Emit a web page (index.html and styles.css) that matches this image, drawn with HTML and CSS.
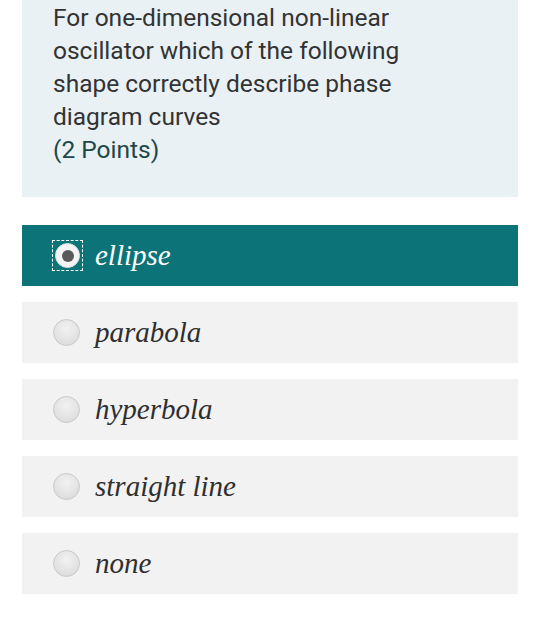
FILE: index.html
```html
<!DOCTYPE html>
<html>
<head>
<meta charset="utf-8">
<link rel="stylesheet" href="styles.css">
</head>
<body>
<div class="page">
  <div class="question">
    <div class="qtext">For one-dimensional non-linear oscillator which of the following shape correctly describe phase diagram curves</div>
    <div class="points">(2 Points)</div>
  </div>
  <div class="options">
    <div class="option selected">
      <span class="focus"><span class="radio"><span class="dot"></span></span></span>
      <span class="label">ellipse</span>
    </div>
    <div class="option">
      <span class="radio"></span>
      <span class="label">parabola</span>
    </div>
    <div class="option">
      <span class="radio"></span>
      <span class="label">hyperbola</span>
    </div>
    <div class="option">
      <span class="radio"></span>
      <span class="label">straight line</span>
    </div>
    <div class="option">
      <span class="radio"></span>
      <span class="label">none</span>
    </div>
  </div>
</div>
</body>
</html>
```
FILE: styles.css
```css
html, body {
  margin: 0;
  padding: 0;
  background: #ffffff;
}
.page {
  width: 496px;
  margin-left: 22px;
}
.question {
  background: #e9f1f5;
  height: 197px;
  box-sizing: border-box;
  padding: 1px 0 0 31px;
  font-family: Roboto, "Liberation Sans", sans-serif;
  font-size: 24.5px;
  line-height: 33px;
  color: #333333;
}
.qtext {
  width: 385px;
}
.points {
  color: #1f4747;
}
.options {
  display: flex;
  flex-direction: column;
  gap: 16px;
  margin-top: 28px;
}
.option {
  height: 61px;
  background: #f2f2f2;
  display: flex;
  align-items: center;
  padding-left: 31px;
  box-sizing: border-box;
}
.option.selected {
  background: #0c7378;
}
.radio {
  width: 27px;
  height: 27px;
  border-radius: 50%;
  background: radial-gradient(circle at 50% 35%, #f2f2f2 0%, #e2e2e2 60%, #d6d6d6 100%);
  border: 1px solid #c9c9c9;
  box-sizing: border-box;
  display: flex;
  align-items: center;
  justify-content: center;
  flex: none;
}
.focus {
  width: 31px;
  height: 31px;
  margin-left: -1px;
  margin-right: -3px;
  border: 1px dashed #ffffff;
  box-sizing: border-box;
  display: flex;
  align-items: center;
  justify-content: center;
}
.selected .radio {
  width: 25px;
  height: 25px;
  background: #f4f4f4;
  border: 1px solid #dddddd;
}
.dot {
  width: 12px;
  height: 12px;
  border-radius: 50%;
  background: #5a5a5a;
}
.label {
  margin-left: 15px;
  font-family: "Liberation Serif", "DejaVu Serif", serif;
  font-style: italic;
  font-size: 29px;
  color: #2f2f2f;
  line-height: 1;
}
.selected .label {
  color: #ffffff;
}
```
